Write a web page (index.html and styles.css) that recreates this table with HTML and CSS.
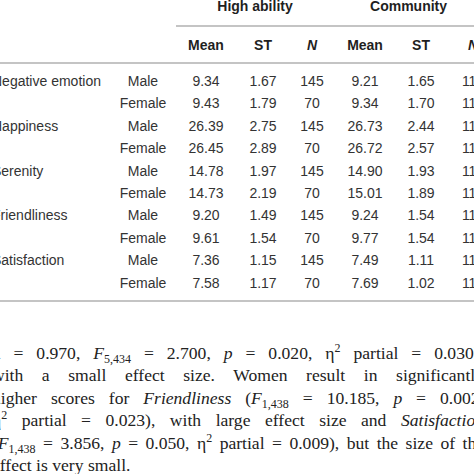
FILE: index.html
```html
<!DOCTYPE html>
<html lang="en">
<head>
<meta charset="utf-8">
<title>Table</title>
<link rel="stylesheet" href="styles.css">
</head>
<body>
<main class="page">
  <table class="stats">
    <colgroup>
      <col class="c-label"><col class="c-sex"><col class="c-mean"><col class="c-st"><col class="c-n"><col class="c-mean2"><col class="c-st2"><col class="c-n2">
    </colgroup>
    <thead>
      <tr class="group-row">
        <th></th><th></th>
        <th colspan="3" class="group">High ability</th>
        <th colspan="3" class="group community">Community</th>
      </tr>
      <tr class="sub-row">
        <th></th><th></th>
        <th>Mean</th><th>ST</th><th><i>N</i></th>
        <th>Mean</th><th>ST</th><th><i>N</i></th>
      </tr>
    </thead>
    <tbody>
      <tr class="first"><td class="label">Negative emotion</td><td>Male</td><td>9.34</td><td>1.67</td><td>145</td><td>9.21</td><td>1.65</td><td>112</td></tr>
      <tr><td class="label"></td><td>Female</td><td>9.43</td><td>1.79</td><td>70</td><td>9.34</td><td>1.70</td><td>113</td></tr>
      <tr><td class="label">Happiness</td><td>Male</td><td>26.39</td><td>2.75</td><td>145</td><td>26.73</td><td>2.44</td><td>112</td></tr>
      <tr><td class="label"></td><td>Female</td><td>26.45</td><td>2.89</td><td>70</td><td>26.72</td><td>2.57</td><td>113</td></tr>
      <tr><td class="label">Serenity</td><td>Male</td><td>14.78</td><td>1.97</td><td>145</td><td>14.90</td><td>1.93</td><td>112</td></tr>
      <tr><td class="label"></td><td>Female</td><td>14.73</td><td>2.19</td><td>70</td><td>15.01</td><td>1.89</td><td>113</td></tr>
      <tr><td class="label">Friendliness</td><td>Male</td><td>9.20</td><td>1.49</td><td>145</td><td>9.24</td><td>1.54</td><td>112</td></tr>
      <tr><td class="label"></td><td>Female</td><td>9.61</td><td>1.54</td><td>70</td><td>9.77</td><td>1.54</td><td>113</td></tr>
      <tr><td class="label">Satisfaction</td><td>Male</td><td>7.36</td><td>1.15</td><td>145</td><td>7.49</td><td>1.11</td><td>112</td></tr>
      <tr class="last"><td class="label"></td><td>Female</td><td>7.58</td><td>1.17</td><td>70</td><td>7.69</td><td>1.02</td><td>113</td></tr>
    </tbody>
  </table>

  <p class="text">
    <span class="line">λ = 0.970, <i>F</i><sub>5,434</sub> = 2.700, <i>p</i> = 0.020, η<sup>2</sup> partial = 0.030),</span>
    <span class="line">with a small effect size. Women result in significantly</span>
    <span class="line">higher scores for <i>Friendliness</i> (<i>F</i><sub>1,438</sub> = 10.185, <i>p</i> = 0.002,</span>
    <span class="line">η<sup>2</sup> partial = 0.023), with large effect size and <i>Satisfaction</i></span>
    <span class="line">(<i>F</i><sub>1,438</sub> = 3.856, <i>p</i> = 0.050, η<sup>2</sup> partial = 0.009), but the size of the</span>
    <span class="line end">effect is very small.</span>
  </p>
</main>
</body>
</html>
```

FILE: styles.css
```css
html, body {
  margin: 0;
  padding: 0;
  overflow: hidden;
  background: #ffffff;
}

.page {
  width: 474px;
  height: 474px;
  overflow: hidden;
}

.stats {
  margin-left: -8px;
  width: 508px;
  table-layout: fixed;
  border-collapse: collapse;
  font-family: "Liberation Sans", Arial, sans-serif;
  font-size: 14px;
  color: #333333;
}

.c-label { width: 118px; }
.c-sex { width: 66px; }
.c-mean { width: 60px; }
.c-st { width: 54px; }
.c-n { width: 44px; }
.c-mean2 { width: 62px; }
.c-st2 { width: 50px; }
.c-n2 { width: 54px; }

.stats th,
.stats td {
  padding: 0;
  text-align: center;
  white-space: nowrap;
}

.stats th {
  font-weight: bold;
  color: #1f1f1f;
}

.group-row th {
  line-height: 12px;
  padding-bottom: 13px;
}

.group-row .group {
  border-bottom: 2px solid #c4c4c4;
}

.group-row .community {
  padding-right: 17px;
}

.sub-row th {
  line-height: 20px;
  padding-top: 8px;
  padding-bottom: 7px;
  border-bottom: 2px solid #c4c4c4;
}

.stats td {
  line-height: 22.4px;
}

.stats td.label {
  text-align: left;
}

.stats tr.first td {
  padding-top: 6px;
}

.stats tr.last td {
  padding-bottom: 6px;
  border-bottom: 2px solid #c4c4c4;
}

.text {
  margin: 40px 0 0 -8px;
  width: 492px;
  font-family: "Liberation Serif", "Times New Roman", serif;
  font-size: 17.6px;
  line-height: 22.4px;
  color: #222222;
  text-align: justify;
}

.text .line {
  display: block;
  text-align: justify;
  text-align-last: justify;
}

.text .line.end {
  text-align-last: left;
}

.text sub,
.text sup {
  font-size: 12px;
  line-height: 0;
}

.text sub {
  vertical-align: -4px;
}

.text sup {
  vertical-align: 7px;
}
```
